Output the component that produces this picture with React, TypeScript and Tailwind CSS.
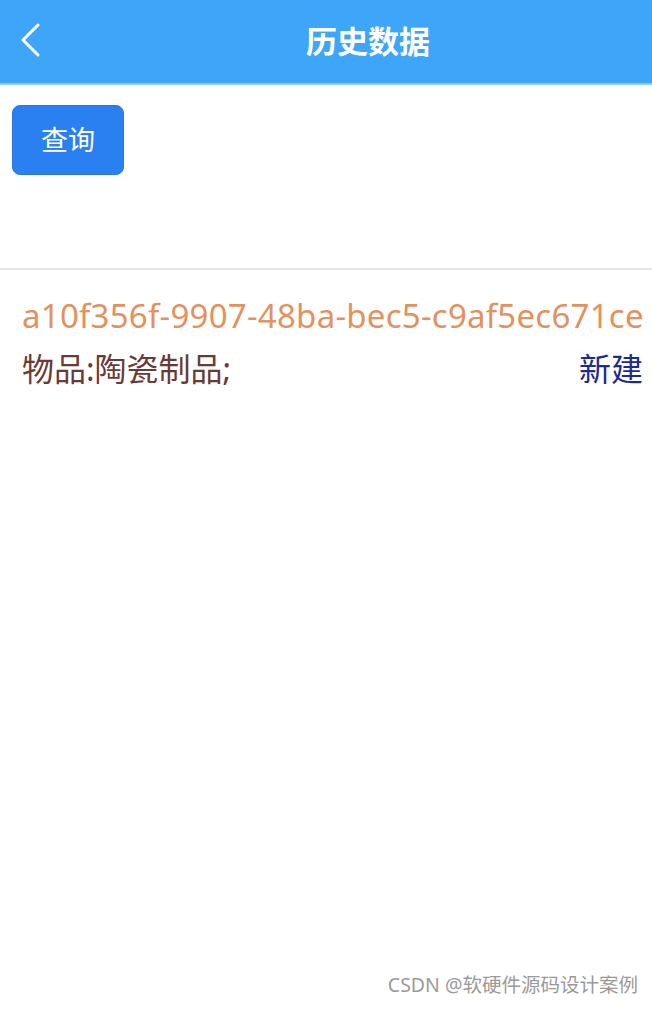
import React from "react";

const records = [
  {
    id: "a10f356f-9907-48ba-bec5-c9af5ec671ce",
    goods: "物品:陶瓷制品;",
    status: "新建",
  },
];

const font = { fontFamily: '"Noto Sans", "Noto Sans CJK SC", sans-serif' };

const App = () => {
  return (
    <div className="relative min-h-[1011px] w-full bg-white" style={font}>
      <header className="relative flex h-[85px] items-center justify-center border-b-2 border-[#8fcdfb] bg-[#3ea6f9]">
        <button className="absolute left-[14px] top-[20px] flex h-[40px] w-[32px] items-center justify-center text-white">
          <svg width="26" height="36" viewBox="0 0 26 36" fill="none">
            <path
              d="M21 3 L6 18 L21 33"
              stroke="white"
              strokeWidth="3"
              strokeLinecap="round"
              strokeLinejoin="round"
            />
          </svg>
        </button>
        <h1 className="ml-[84px] text-[31px] font-bold text-white">
          历史数据
        </h1>
      </header>

      <div className="h-[183px] px-[12px] pt-[20px]">
        <button className="flex h-[70px] w-[112px] items-center justify-center rounded-[8px] border border-[#2a78e0] bg-[#2b80f1] text-[27px] text-white">
          查询
        </button>
      </div>

      <div className="h-[2px] bg-[#e6e6e6]" />

      <div className="px-[22px] pt-[24px]">
        {records.map((r) => (
          <div key={r.id}>
            <div className="whitespace-nowrap text-[33px] leading-[44px] tracking-[0.25px] text-[#e3925e]">
              {r.id}
            </div>
            <div className="mt-[10px] flex items-center justify-between text-[32px] leading-[42px]">
              <span className="text-[#6b3a35]">{r.goods}</span>
              <span className="mr-[-13px] text-[#1d2a8f]">{r.status}</span>
            </div>
          </div>
        ))}
      </div>

      <div className="absolute bottom-[12px] right-[14px] text-[19.5px] text-[#9a9a9a]">
        CSDN @软硬件源码设计案例
      </div>
    </div>
  );
};

export default App;
